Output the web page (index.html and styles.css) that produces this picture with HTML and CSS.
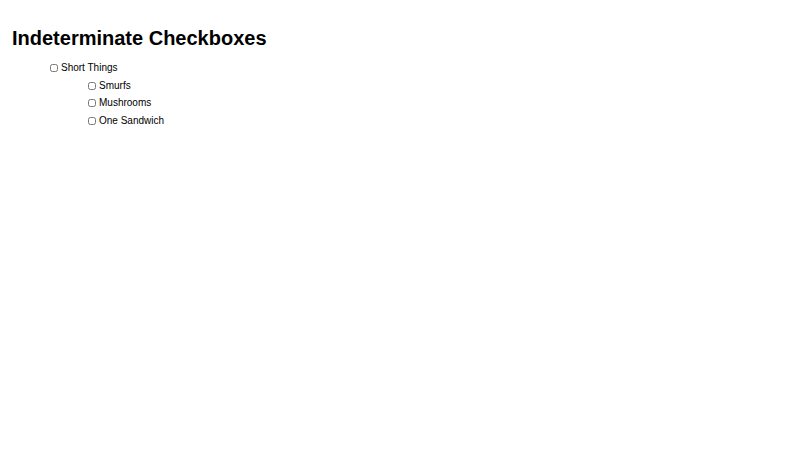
FILE: index.html
```html
<!DOCTYPE html>
<html>
<head>
<meta charset="utf-8">
<link rel="stylesheet" href="styles.css">
</head>
<body>
<h1 class="title">Indeterminate Checkboxes</h1>
<ul class="tree">
  <li class="item">
    <label class="row"><input type="checkbox" class="box"><span>Short Things</span></label>
    <ul class="tree sub">
      <li class="item"><label class="row"><input type="checkbox" class="box"><span>Smurfs</span></label></li>
      <li class="item"><label class="row"><input type="checkbox" class="box"><span>Mushrooms</span></label></li>
      <li class="item"><label class="row"><input type="checkbox" class="box"><span>One Sandwich</span></label></li>
    </ul>
  </li>
</ul>
</body>
</html>
```
FILE: styles.css
```css
html, body {
  margin: 0;
  background: #fff;
}
body {
  padding: 26px 12px;
  font-family: "Liberation Sans", Arial, sans-serif;
  color: #000;
}
.title {
  margin: 0 0 9px 0;
  font-size: 20px;
  font-weight: bold;
  line-height: 24px;
}
.tree {
  list-style: none;
  margin: 0;
  padding: 0 0 0 38px;
}
.tree.sub {
  padding-left: 38px;
}
.item {
  font-size: 10px;
  line-height: 17.67px;
}
.row {
  display: flex;
  align-items: center;
}
.box {
  width: 8px;
  height: 8px;
  margin: 0 3px 0 0;
}
```
